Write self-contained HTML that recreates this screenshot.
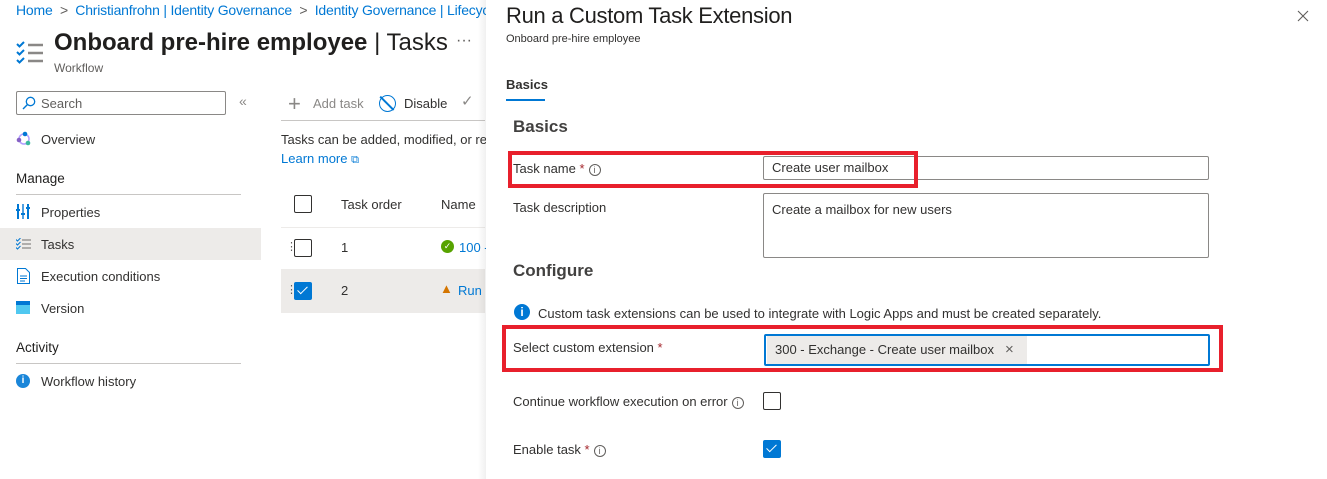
<!DOCTYPE html>
<html><head><meta charset="utf-8"><style>
*{margin:0;padding:0;box-sizing:border-box}
body{width:1327px;height:479px;overflow:hidden;background:#fff;font-family:"Liberation Sans",sans-serif;color:#323130;position:relative}
.a{position:absolute;white-space:nowrap}
.l{color:#0078d4}
.t13{font-size:13px}
.line{position:absolute;height:1px;background:#c8c6c4}
.cb{position:absolute;width:18px;height:18px;border:1px solid #323130;border-radius:2px;background:#fff}
.cbc{position:absolute;width:18px;height:18px;border-radius:2px;background:#0078d4}
.cbc:after{content:"";position:absolute;left:6px;top:2px;width:4px;height:9px;border:solid #fff;border-width:0 1.5px 1.5px 0;transform:rotate(45deg)}
.inp{position:absolute;border:1px solid #8a8886;border-radius:2px;background:#fff;font-size:13px;padding:0 8px}
.red{position:absolute;border:4px solid #e8202c}
.info{display:inline-block;width:12px;height:12px;border:1px solid #605e5c;border-radius:50%;font-size:9px;text-align:center;line-height:10px;color:#605e5c;vertical-align:middle;margin-left:4px}
</style></head><body>
<div class="a l" style="left:16px;top:2px;font-size:14px;letter-spacing:-0.2px">Home &nbsp;<span style="color:#605e5c">&gt;</span>&nbsp; Christianfrohn | Identity Governance &nbsp;<span style="color:#605e5c">&gt;</span>&nbsp; Identity Governance | Lifecycle</div>
<svg class="a" style="left:16px;top:40px" width="28" height="24" viewBox="0 0 28 24"><g stroke="#0078d4" stroke-width="2" fill="none"><path d="M1 4l2.5 2.5L8 2"/><path d="M1 12l2.5 2.5L8 10"/><path d="M1 20l2.5 2.5L8 18"/></g><g stroke="#8a8886" stroke-width="2.5"><path d="M12 5h15M12 13h15M12 21h15"/></g></svg>
<div class="a" style="left:54px;top:29px;font-size:24px;color:#201f1e"><span style="font-weight:bold">Onboard pre-hire employee</span> | Tasks</div>
<div class="a" style="left:456px;top:32px;font-size:16px;color:#605e5c">···</div>
<div class="a" style="left:54px;top:61px;font-size:12px;color:#605e5c">Workflow</div>
<div class="a" style="left:16px;top:91px;width:210px;height:24px;border:1px solid #8a8886;border-radius:2px"></div>
<svg class="a" style="left:22px;top:96px" width="14" height="14" viewBox="0 0 14 14"><circle cx="8.5" cy="5.5" r="4.2" stroke="#0078d4" fill="none" stroke-width="1.3"/><path d="M5.5 8.5L1 13" stroke="#0078d4" stroke-width="1.4"/></svg>
<div class="a t13" style="left:41px;top:96px;color:#605e5c">Search</div>
<div class="a" style="left:239px;top:93px;font-size:14px;color:#8a8886">«</div>
<svg class="a" style="left:16px;top:131px" width="16" height="16" viewBox="0 0 16 16"><circle cx="8" cy="8" r="5" fill="none" stroke="#b4a0ff" stroke-width="1.5"/><circle cx="9" cy="3" r="2.3" fill="#0078d4"/><circle cx="3" cy="9" r="2.3" fill="#8661c5"/><circle cx="12" cy="12" r="2.3" fill="#3bb89f"/></svg>
<div class="a t13" style="left:41px;top:132px">Overview</div>
<div class="a" style="left:16px;top:171px;font-size:13.5px;color:#201f1e">Manage</div>
<div class="line" style="left:16px;top:194px;width:225px"></div>
<svg class="a" style="left:16px;top:204px" width="14" height="15"><rect x="1" y="0" width="2" height="15" fill="#0078d4"/><rect x="6" y="0" width="2" height="15" fill="#50a0e0"/><rect x="11" y="0" width="2" height="15" fill="#0078d4"/><rect x="0" y="5" width="4" height="2" fill="#0078d4"/><rect x="5" y="9" width="4" height="2" fill="#0078d4"/><rect x="10" y="3" width="4" height="2" fill="#0078d4"/></svg>
<div class="a t13" style="left:41px;top:205px">Properties</div>
<div class="a" style="left:0;top:228px;width:261px;height:32px;background:#edebe9"></div>
<svg class="a" style="left:16px;top:238px" width="15" height="12" viewBox="0 0 15 12"><g stroke="#0078d4" stroke-width="1" fill="none"><path d="M0 1.5l1.5 1.5 3-3"/><path d="M0 5.5l1.5 1.5 3-3"/><path d="M0 9.5l1.5 1.5 3-3"/></g><path d="M6 2h9M6 6h9M6 10h9" stroke="#8a8886" stroke-width="1.3"/></svg>
<div class="a t13" style="left:41px;top:237px">Tasks</div>
<svg class="a" style="left:17px;top:268px" width="13" height="16"><path d="M0.5 0.5h8l4 4v11h-12z" fill="#fff" stroke="#0078d4"/><path d="M3 8h7M3 10.5h7M3 13h5" stroke="#0078d4"/></svg>
<div class="a t13" style="left:41px;top:269px">Execution conditions</div>
<svg class="a" style="left:16px;top:301px" width="14" height="13"><rect width="14" height="13" fill="#50c8f0"/><rect width="14" height="4" fill="#0078d4"/></svg>
<div class="a t13" style="left:41px;top:301px">Version</div>
<div class="a" style="left:16px;top:340px;font-size:13.5px;color:#201f1e">Activity</div>
<div class="line" style="left:16px;top:363px;width:225px"></div>
<div class="a" style="left:16px;top:374px;width:14px;height:14px;border-radius:50%;background:#1a86d9;color:#fff;font-size:10px;font-weight:bold;text-align:center;line-height:14px">i</div>
<div class="a t13" style="left:41px;top:374px">Workflow history</div>
<div class="a" style="left:288px;top:91px;font-size:22px;color:#8a8886;font-weight:300">+</div>
<div class="a t13" style="left:313px;top:96px;color:#8a8886">Add task</div>
<div class="a" style="left:379px;top:95px;width:17px;height:17px;border:1.5px solid #0078d4;border-radius:50%"></div>
<div class="a" style="left:386px;top:94px;width:1.5px;height:19px;background:#0078d4;transform:rotate(-45deg)"></div>
<div class="a t13" style="left:404px;top:96px">Disable</div>
<div class="a" style="left:461px;top:92px;font-size:15px;color:#8a8886">✓</div>
<div class="line" style="left:281px;top:120px;width:204px"></div>
<div class="a t13" style="left:281px;top:132px">Tasks can be added, modified, or removed</div>
<div class="a t13 l" style="left:281px;top:151px">Learn more <span style="font-size:11px">⧉</span></div>
<div class="cb" style="left:294px;top:195px"></div>
<div class="a t13" style="left:341px;top:197px">Task order</div>
<div class="a t13" style="left:441px;top:197px">Name</div>
<div class="line" style="left:281px;top:227px;width:204px;background:#edebe9"></div>
<div class="a" style="left:286px;top:240px;font-size:11px;color:#605e5c">⋮</div>
<div class="cb" style="left:294px;top:239px"></div>
<div class="a t13" style="left:341px;top:240px">1</div>
<div class="a" style="left:441px;top:240px;width:13px;height:13px;border-radius:50%;background:#57a300;color:#fff;font-size:9px;text-align:center;line-height:13px">✓</div>
<div class="a t13 l" style="left:459px;top:240px">100 -</div>
<div class="a" style="left:281px;top:269px;width:204px;height:44px;background:#edebe9"></div>
<div class="a" style="left:286px;top:283px;font-size:11px;color:#605e5c">⋮</div>
<div class="cbc" style="left:294px;top:282px"></div>
<div class="a t13" style="left:341px;top:283px">2</div>
<div class="a" style="left:440px;top:281px;font-size:13px;color:#d47500">▲</div>
<div class="a t13 l" style="left:458px;top:283px">Run</div>
<div class="a" style="left:478px;top:0;width:8px;height:479px;background:linear-gradient(to right,rgba(0,0,0,0),rgba(0,0,0,0.06))"></div>
<div class="a" style="left:486px;top:0;width:841px;height:479px;background:#fff"></div>
<div class="a" style="left:506px;top:3px;font-size:22px;color:#201f1e;letter-spacing:-0.3px">Run a Custom Task Extension</div>
<div class="a" style="left:506px;top:33px;font-size:11px;color:#323130">Onboard pre-hire employee</div>
<svg class="a" style="left:1297px;top:10px" width="12" height="12"><path d="M1 1L11 11M11 1L1 11" stroke="#605e5c" stroke-width="1.1"/></svg>
<div class="a" style="left:506px;top:77px;font-size:13px;font-weight:bold;color:#323130">Basics</div>
<div class="a" style="left:506px;top:99px;width:39px;height:2px;background:#0078d4"></div>
<div class="a" style="left:513px;top:117px;font-size:17px;font-weight:bold;color:#323130;-webkit-text-stroke:0;opacity:.92">Basics</div>
<div class="a t13" style="left:513px;top:161px">Task name <span style="color:#a4262c">*</span><span class="info">i</span></div>
<div class="inp" style="left:763px;top:156px;width:446px;height:24px;line-height:22px">Create user mailbox</div>
<div class="red" style="left:508px;top:151px;width:410px;height:37px"></div>
<div class="a t13" style="left:513px;top:200px">Task description</div>
<div class="inp" style="left:763px;top:193px;width:446px;height:65px;padding-top:8px">Create a mailbox for new users</div>
<div class="a" style="left:513px;top:261px;font-size:17px;font-weight:bold;color:#323130;opacity:.92">Configure</div>
<div class="a" style="left:514px;top:304px;width:16px;height:16px;border-radius:50%;background:#0078d4;color:#fff;font-size:12px;font-weight:bold;text-align:center;line-height:16px">i</div>
<div class="a t13" style="left:538px;top:306px">Custom task extensions can be used to integrate with Logic Apps and must be created separately.</div>
<div class="a t13" style="left:513px;top:340px">Select custom extension <span style="color:#a4262c">*</span></div>
<div class="a" style="left:764px;top:334px;width:446px;height:32px;border:2px solid #0078d4;border-radius:2px"></div>
<div class="a t13" style="left:767px;top:336px;width:260px;height:28px;background:#edebe9;line-height:28px;padding-left:8px">300 - Exchange - Create user mailbox<span style="position:absolute;left:238px;color:#605e5c;font-size:15px">×</span></div>
<div class="red" style="left:502px;top:325px;width:721px;height:47px"></div>
<div class="a t13" style="left:513px;top:394px">Continue workflow execution on error<span class="info">i</span></div>
<div class="cb" style="left:763px;top:392px"></div>
<div class="a t13" style="left:513px;top:442px">Enable task <span style="color:#a4262c">*</span><span class="info">i</span></div>
<div class="cbc" style="left:763px;top:440px"></div>
</body></html>
